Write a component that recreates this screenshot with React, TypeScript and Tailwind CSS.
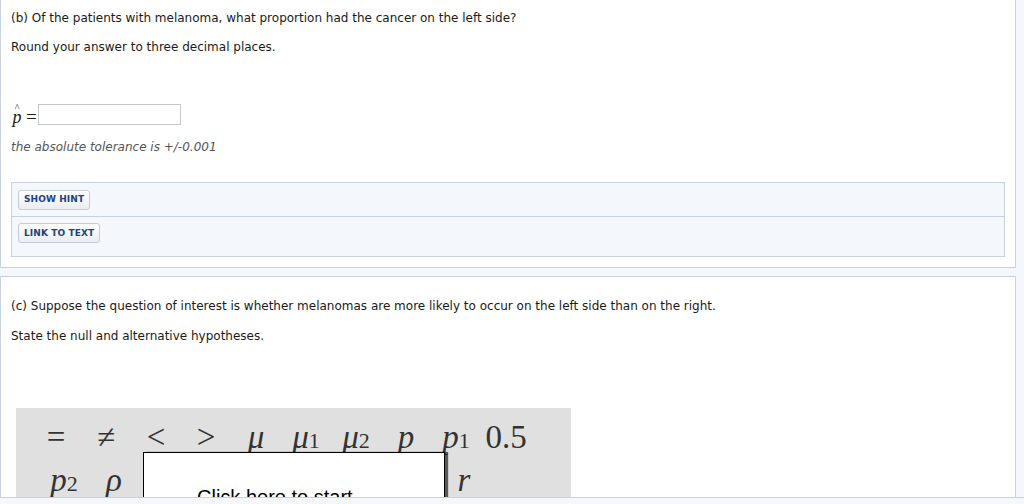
import React from 'react';

const sans = { fontFamily: '"DejaVu Sans", Verdana, sans-serif' };
const serif = { fontFamily: '"Liberation Serif", "DejaVu Serif", serif' };

function HintButton({ label }: { label: string }) {
  return (
    <button
      className="h-[20px] px-[5px] rounded-[3px] border border-[#c3cdd9] bg-gradient-to-b from-white to-[#e9edf2] text-[9px] font-bold tracking-[0.1px] text-[#23427f] leading-none"
      style={sans}
    >
      {label}
    </button>
  );
}

type Cell = { main: string; sub?: string; italic?: boolean };

const topRow: Cell[] = [
  { main: '=' },
  { main: '≠' },
  { main: '<' },
  { main: '>' },
  { main: 'μ', italic: true },
  { main: 'μ', sub: '1', italic: true },
  { main: 'μ', sub: '2', italic: true },
  { main: 'p', italic: true },
  { main: 'p', sub: '1', italic: true },
  { main: '0.5' },
];

const bottomRow: Cell[] = [
  { main: 'p', sub: '2', italic: true },
  { main: 'ρ', italic: true },
  { main: '' },
  { main: '' },
  { main: '' },
  { main: '' },
  { main: '' },
  { main: '' },
  { main: 'r', italic: true },
];

function SymCell({ cell }: { cell: Cell }) {
  return (
    <span className="flex w-[50px] items-baseline justify-center text-[33px] leading-none text-[#333]" style={serif}>
      <span className={cell.italic ? 'italic' : ''}>{cell.main}</span>
      {cell.sub && <span className="text-[22px]">{cell.sub}</span>}
    </span>
  );
}

export default function App() {
  return (
    <div className="relative h-[504px] w-[1024px] overflow-hidden bg-[#f4f7fb] text-[12px] text-[#1a1a1a]" style={sans}>
      <div className="w-[1016px]">
        {/* part (b) */}
        <div className="h-[268px] border-x border-b border-[#c8d2de] bg-white px-[10px] pt-[10px]">
          <p className="leading-[16px]">(b) Of the patients with melanoma, what proportion had the cancer on the left side?</p>
          <p className="mt-[13px] leading-[16px]">Round your answer to three decimal places.</p>

          <div className="mt-[49px] flex h-[21px] items-center">
            <span className="flex w-[12px] flex-col items-center italic text-[18px] leading-none" style={serif}>
              <span className="text-[10px] not-italic leading-[6px] -mb-[1px]">^</span>
              <span className="leading-[14px]">p</span>
            </span>
            <span className="ml-[3px] mt-[3px] text-[19px] leading-none" style={serif}>=</span>
            <input className="ml-[1px] h-[21px] w-[143px] border border-[#c8c8c8] bg-white outline-none" />
          </div>

          <p className="mt-[14px] italic leading-[16px] text-[#555]">the absolute tolerance is +/-0.001</p>

          <div className="mt-[27px] border border-[#c8d2de] bg-[#f4f7fb]">
            <div className="border-b border-[#c8d2de] px-[6px] pt-[6px] pb-[6px]">
              <HintButton label="SHOW HINT" />
            </div>
            <div className="h-[39px] px-[6px] pt-[6px]">
              <HintButton label="LINK TO TEXT" />
            </div>
          </div>
        </div>

        {/* part (c) */}
        <div className="mt-[8px] h-[221px] overflow-hidden border-x border-t border-[#c8d2de] bg-white px-[10px] pt-[21px]">
          <p className="leading-[16px]">(c) Suppose the question of interest is whether melanomas are more likely to occur on the left side than on the right.</p>
          <p className="mt-[14px] leading-[16px]">State the null and alternative hypotheses.</p>

          <div className="relative mt-[64px] ml-[5px] h-[100px] w-[555px] bg-[#e0e0e0]">
            <div className="flex pl-[15px] pt-[13px]">
              {topRow.map((c, i) => (
                <SymCell key={i} cell={c} />
              ))}
            </div>
            <div className="flex pl-[23px] pt-[10px]">
              {bottomRow.map((c, i) => (
                <SymCell key={i} cell={c} />
              ))}
            </div>
            <div
              className="absolute left-[127px] top-[44px] h-[80px] w-[302px] border border-black bg-white shadow-[3px_0_1px_rgba(0,0,0,0.6)] pl-[53px] pt-[34px]"
              style={{ fontFamily: '"Liberation Sans", Arial, sans-serif' }}
            >
              <span className="text-[20px] leading-none text-black">Click here to start</span>
            </div>
          </div>
        </div>
      </div>
      <div className="h-[1px] w-full bg-[#c8d2de]" />
    </div>
  );
}
